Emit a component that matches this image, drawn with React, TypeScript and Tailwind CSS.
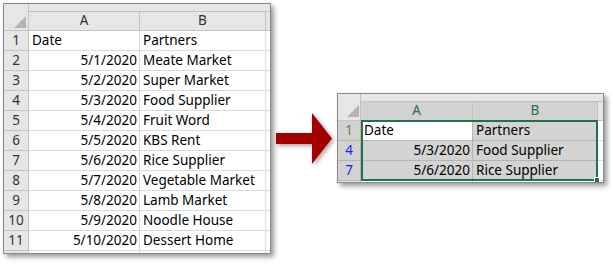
import React from 'react';

type Row = { num: string; date: string; partner: string };

const ALL_ROWS: Row[] = [
  { num: '2', date: '5/1/2020', partner: 'Meate Market' },
  { num: '3', date: '5/2/2020', partner: 'Super Market' },
  { num: '4', date: '5/3/2020', partner: 'Food Supplier' },
  { num: '5', date: '5/4/2020', partner: 'Fruit Word' },
  { num: '6', date: '5/5/2020', partner: 'KBS Rent' },
  { num: '7', date: '5/6/2020', partner: 'Rice Supplier' },
  { num: '8', date: '5/7/2020', partner: 'Vegetable Market' },
  { num: '9', date: '5/8/2020', partner: 'Lamb Market' },
  { num: '10', date: '5/9/2020', partner: 'Noodle House' },
  { num: '11', date: '5/10/2020', partner: 'Dessert Home' },
];

const FILTERED = ALL_ROWS.filter((r) => r.num === '4' || r.num === '7');

// little grey triangle in the select-all corner
const Corner = () => (
  <svg width="12" height="12" viewBox="0 0 12 12" className="block">
    <polygon points="12,0 12,12 0,12" fill="#b3b3b3" />
  </svg>
);

const ColHead = ({ label, className }: { label: string; className: string }) => (
  <div className="bg-[#e6e6e6] border-b border-[#c3c3c3]">
    <div
      className={`mt-[7px] h-[19px] border-t border-r border-[#c3c3c3] flex items-center justify-center ${className}`}
    >
      {label}
    </div>
  </div>
);

function FullSheet() {
  return (
    <div className="w-[268px] h-[251px] border border-[#8a8a8a] bg-white shadow-[3px_3px_5px_rgba(0,0,0,0.4)] overflow-hidden">
      <div className="grid grid-cols-[25px_111px_126px_4px] grid-rows-[27px_repeat(11,20px)_2px] text-[13.5px] leading-none">
        <div className="bg-[#e6e6e6] border-r border-b border-[#c3c3c3] flex items-end justify-end pr-[2px] pb-[2px]">
          <Corner />
        </div>
        <ColHead label="A" className="text-[#333]" />
        <ColHead label="B" className="text-[#333]" />
        <div className="bg-[#e6e6e6] border-b border-[#c3c3c3]">
          <div className="mt-[7px] h-[19px] border-t border-[#c3c3c3]" />
        </div>

        <div className="bg-[#e6e6e6] border-r border-b border-[#c3c3c3] flex items-center justify-center text-[#333]">1</div>
        <div className="border-r border-b border-[#dadada] flex items-center pl-[3px]">Date</div>
        <div className="border-r border-b border-[#dadada] flex items-center pl-[3px]">Partners</div>
        <div className="border-b border-[#dadada]" />

        {ALL_ROWS.map((r) => (
          <React.Fragment key={r.num}>
            <div className="bg-[#e6e6e6] border-r border-b border-[#c3c3c3] flex items-center justify-center text-[#333]">
              {r.num}
            </div>
            <div className="border-r border-b border-[#dadada] flex items-center justify-end pr-[2px]">{r.date}</div>
            <div className="border-r border-b border-[#dadada] flex items-center pl-[3px]">{r.partner}</div>
            <div className="border-b border-[#dadada]" />
          </React.Fragment>
        ))}

        <div className="bg-[#e6e6e6] border-r border-[#c3c3c3]" />
        <div className="border-r border-[#dadada]" />
        <div className="border-r border-[#dadada]" />
        <div />
      </div>
    </div>
  );
}

function FilteredSheet() {
  return (
    <div className="relative w-[267px] h-[90px] border border-[#8a8a8a] bg-white shadow-[3px_3px_5px_rgba(0,0,0,0.4)] overflow-hidden">
      <div className="grid grid-cols-[23px_112px_125px_5px] grid-rows-[27px_repeat(3,20px)_1px] text-[13.5px] leading-none">
        <div className="bg-[#e6e6e6] border-r border-b border-[#c3c3c3] flex items-end justify-end pr-[1px] pb-[3px]">
          <Corner />
        </div>
        <ColHead label="A" className="text-[#217346] bg-[#d2d2d2]" />
        <ColHead label="B" className="text-[#217346] bg-[#d2d2d2]" />
        <div className="bg-[#e6e6e6] border-b border-[#c3c3c3]">
          <div className="mt-[7px] h-[19px] border-t border-[#c3c3c3]" />
        </div>

        <div className="bg-[#d2d2d2] border-r border-b border-[#b5b5b5] flex items-center justify-center text-[#86792d]">1</div>
        <div className="bg-white border-r border-b border-[#b5b5b5] flex items-center pl-[3px]">Date</div>
        <div className="bg-[#d3d3d3] border-r border-b border-[#b5b5b5] flex items-center pl-[3px]">Partners</div>
        <div className="border-b border-[#dadada]" />

        {FILTERED.map((r) => (
          <React.Fragment key={r.num}>
            <div className="bg-[#d2d2d2] border-r border-b border-[#b5b5b5] flex items-center justify-center text-[#1f1fff]">
              {r.num}
            </div>
            <div className="bg-[#d3d3d3] border-r border-b border-[#b5b5b5] flex items-center justify-end pr-[2px]">{r.date}</div>
            <div className="bg-[#d3d3d3] border-r border-b border-[#b5b5b5] flex items-center pl-[3px]">{r.partner}</div>
            <div className="border-b border-[#dadada]" />
          </React.Fragment>
        ))}

        <div className="bg-[#e6e6e6] border-r border-[#c3c3c3]" />
        <div className="border-r border-[#dadada]" />
        <div className="border-r border-[#dadada]" />
        <div />
      </div>

      {/* selection outline with fill handle */}
      <div className="absolute left-[23px] top-[26px] w-[237px] h-[61px] border-2 border-[#217346]">
        <div className="absolute right-[-4px] bottom-[-4px] w-[6px] h-[6px] bg-[#217346] border border-white" />
      </div>
    </div>
  );
}

const Arrow = () => (
  <svg width="60" height="56" viewBox="0 0 60 56" className="block drop-shadow-[2px_2px_2px_rgba(0,0,0,0.35)]">
    <polygon points="0,20 36,20 36,0 56,25.5 36,51 36,31 0,31" fill="#a50000" />
  </svg>
);

export default function App() {
  return (
    <div className="w-[613px] h-[264px] bg-white flex items-start pl-[3px] pt-[3px] font-['Noto_Sans',sans-serif] text-black">
      <FullSheet />
      <div className="ml-[5px] mt-[110px]">
        <Arrow />
      </div>
      <div className="ml-[1px] mt-[90px]">
        <FilteredSheet />
      </div>
    </div>
  );
}
